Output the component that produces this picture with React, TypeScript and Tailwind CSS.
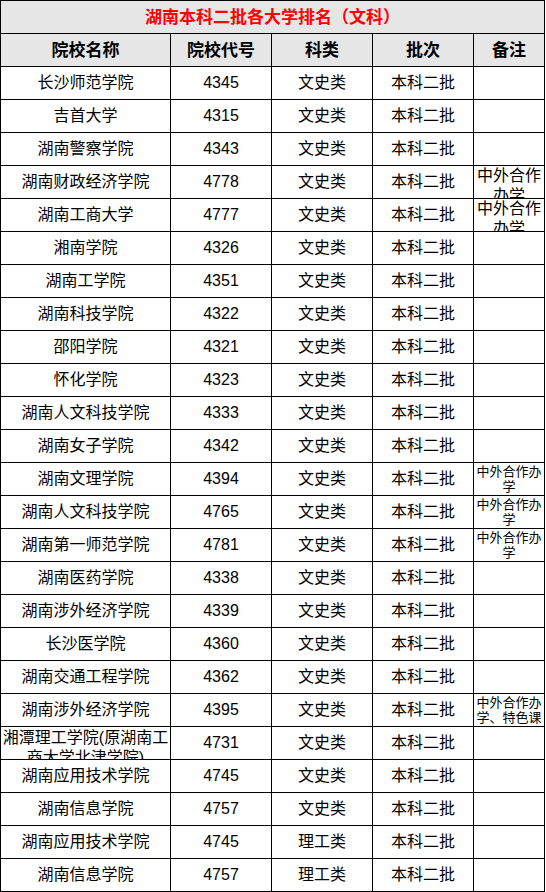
import React from "react";

type Row = { name: string; code: string; kind: string; note?: string; noteSize?: "lg" | "sm" };

const rows: Row[] = [
  { name: "长沙师范学院", code: "4345", kind: "文史类" },
  { name: "吉首大学", code: "4315", kind: "文史类" },
  { name: "湖南警察学院", code: "4343", kind: "文史类" },
  { name: "湖南财政经济学院", code: "4778", kind: "文史类", note: "中外合作办学", noteSize: "lg" },
  { name: "湖南工商大学", code: "4777", kind: "文史类", note: "中外合作办学", noteSize: "lg" },
  { name: "湘南学院", code: "4326", kind: "文史类" },
  { name: "湖南工学院", code: "4351", kind: "文史类" },
  { name: "湖南科技学院", code: "4322", kind: "文史类" },
  { name: "邵阳学院", code: "4321", kind: "文史类" },
  { name: "怀化学院", code: "4323", kind: "文史类" },
  { name: "湖南人文科技学院", code: "4333", kind: "文史类" },
  { name: "湖南女子学院", code: "4342", kind: "文史类" },
  { name: "湖南文理学院", code: "4394", kind: "文史类", note: "中外合作办学", noteSize: "sm" },
  { name: "湖南人文科技学院", code: "4765", kind: "文史类", note: "中外合作办学", noteSize: "sm" },
  { name: "湖南第一师范学院", code: "4781", kind: "文史类", note: "中外合作办学", noteSize: "sm" },
  { name: "湖南医药学院", code: "4338", kind: "文史类" },
  { name: "湖南涉外经济学院", code: "4339", kind: "文史类" },
  { name: "长沙医学院", code: "4360", kind: "文史类" },
  { name: "湖南交通工程学院", code: "4362", kind: "文史类" },
  { name: "湖南涉外经济学院", code: "4395", kind: "文史类", note: "中外合作办学、特色课", noteSize: "sm" },
  { name: "湘潭理工学院(原湖南工商大学北津学院)", code: "4731", kind: "文史类" },
  { name: "湖南应用技术学院", code: "4745", kind: "文史类" },
  { name: "湖南信息学院", code: "4757", kind: "文史类" },
  { name: "湖南应用技术学院", code: "4745", kind: "理工类" },
  { name: "湖南信息学院", code: "4757", kind: "理工类" },
];

const cell = "h-[33px] border-r border-b border-black overflow-hidden";

export default function App() {
  return (
    <div
      className="w-[546px] h-[892px] bg-white"
      style={{ fontFamily: '"Liberation Sans", "Noto Sans CJK SC", sans-serif' }}
    >
      <div className="grid grid-cols-[170px_101px_101px_101px_71px] w-[545px] border-l border-t border-black text-[16px] text-black">
        <div className={`${cell} col-span-5 bg-[#e6e6e6] flex items-center justify-center font-bold text-[17px] text-[#ff0000] leading-none`}>
          湖南本科二批各大学排名（文科）
        </div>
        {["院校名称", "院校代号", "科类", "批次", "备注"].map((h) => (
          <div key={h} className={`${cell} bg-[#e6e6e6] flex items-center justify-center font-bold text-[17px] leading-none`}>
            {h}
          </div>
        ))}
        {rows.map((r, i) => {
          const long = r.name.length > 10;
          return (
            <React.Fragment key={i}>
              {long ? (
                <div className={`${cell} flex items-start justify-center text-center leading-[20px] pt-[1px]`}>
                  {r.name}
                </div>
              ) : (
                <div className={`${cell} flex items-center justify-center leading-none`}>{r.name}</div>
              )}
              <div className={`${cell} flex items-center justify-center leading-none`}>{r.code}</div>
              <div className={`${cell} flex items-center justify-center leading-none`}>{r.kind}</div>
              <div className={`${cell} flex items-center justify-center leading-none`}>本科二批</div>
              {r.note && r.noteSize === "lg" ? (
                <div className={`${cell} flex items-start justify-center text-center leading-[20px]`}>
                  {r.note}
                </div>
              ) : r.note ? (
                <div className={`${cell} flex items-center justify-center text-center text-[13px] leading-[15px]`}>
                  {r.note}
                </div>
              ) : (
                <div className={cell}></div>
              )}
            </React.Fragment>
          );
        })}
      </div>
    </div>
  );
}
